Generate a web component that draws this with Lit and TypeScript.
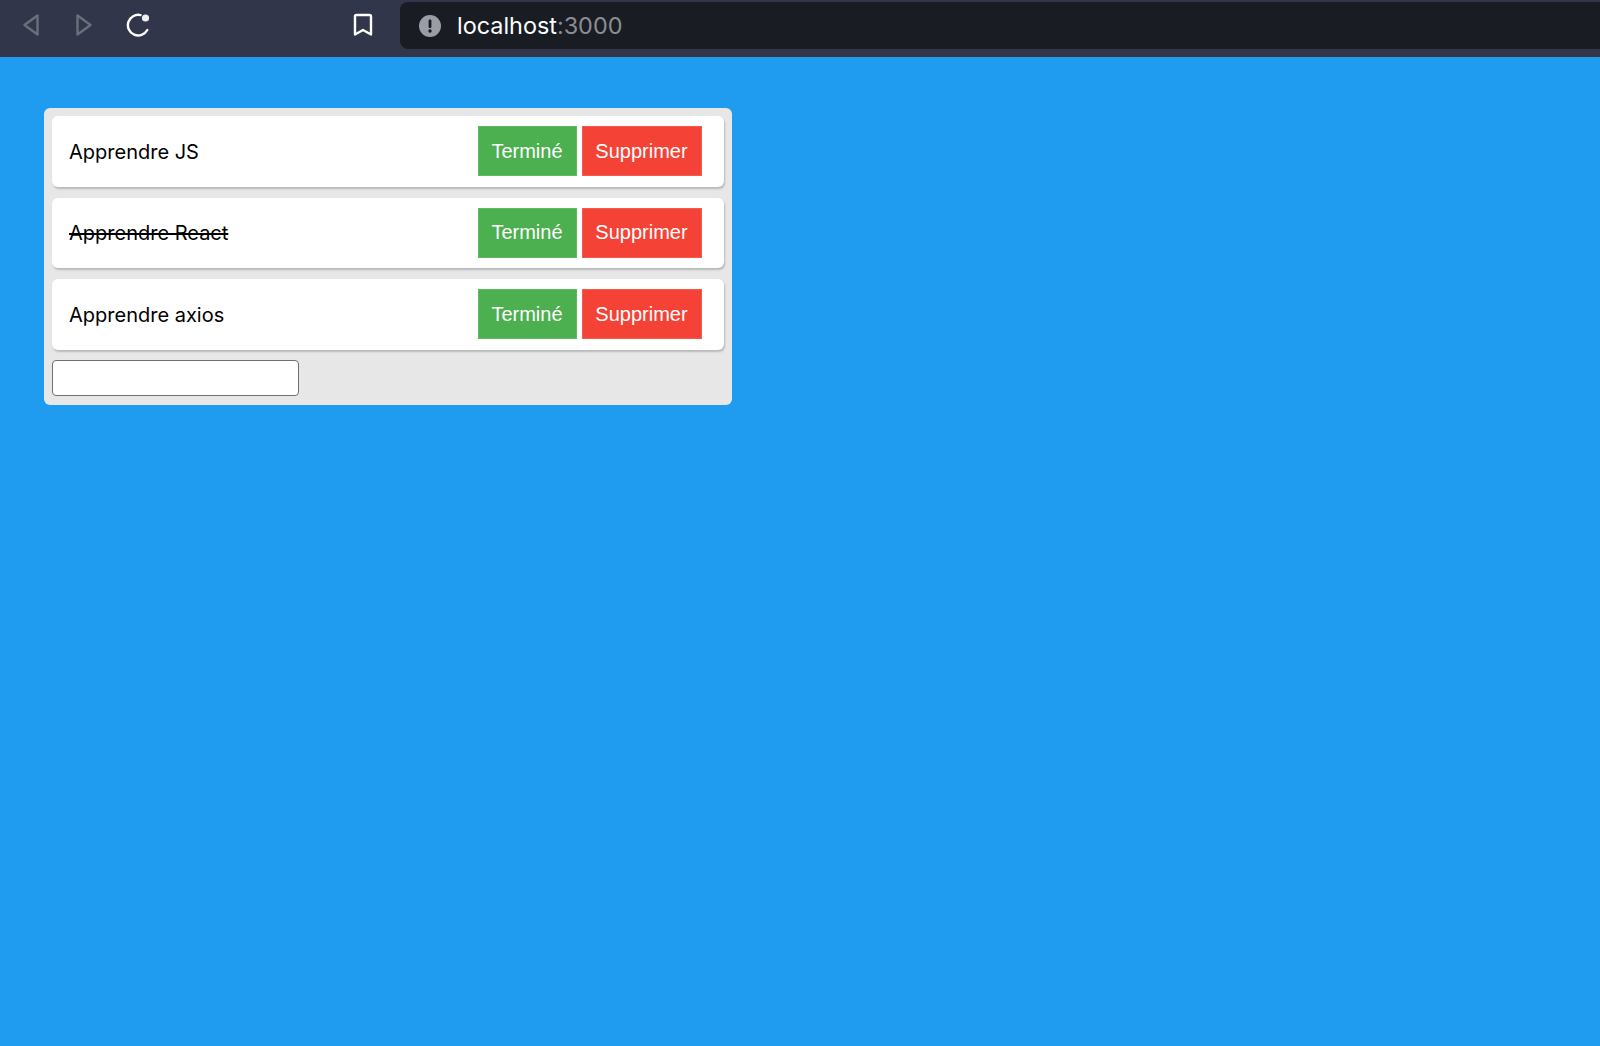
import { LitElement, html, css } from "lit";
import { customElement } from "lit/decorators.js";

const todos = [
  { text: "Apprendre JS", done: false },
  { text: "Apprendre React", done: true },
  { text: "Apprendre axios", done: false },
];

@customElement("app-root")
export class AppRoot extends LitElement {
  static styles = css`
    :host { display: block; min-height: 1046px; background: #1f9cf0; font-family: Inter, "Liberation Sans", sans-serif; }
    .bar { height: 57px; box-sizing: border-box; background: #32364a; display: flex; align-items: flex-start; }
    .nav { display: flex; width: 400px; height: 50px; flex: none; align-items: center; }
    .nav svg { display: block; flex: none; }
    .back { margin-left: 22px; }
    .fwd { margin-left: 35px; }
    .reload { margin-left: 33px; }
    .mark { margin-left: 203px; }
    .url { flex: 1; height: 47px; margin-top: 2px; background: #191c23; border-radius: 8px 0 0 8px; display: flex; align-items: center; padding-left: 19px; box-sizing: border-box; }
    .host { margin-left: 16px; font-size: 23.4px; color: #fff; padding-bottom: 1px; }
    .port { color: #8b8d91; }
    .panel { margin: 51px 0 0 44px; width: 688px; box-sizing: border-box; background: #e7e7e7; border-radius: 6px; padding: 8px 8px 8.5px; display: flex; flex-direction: column; }
    .item { height: 70.5px; margin-bottom: 11px; box-sizing: border-box; background: #fff; border-radius: 6px; box-shadow: 1px 2px 2px rgba(0,0,0,.2); display: flex; align-items: center; padding: 0 22.5px 0 17px; }
    .item:nth-of-type(3) { margin-bottom: 10.5px; }
    .text { flex: 1; font-size: 20px; color: #000; padding-top: 1px; }
    .done { text-decoration: line-through; }
    button { height: 50px; border: 1px solid; box-sizing: border-box; color: #fff; font: 20px "Liberation Sans", Arial, sans-serif; padding: 0; margin-left: 5px; }
    .ok { width: 99px; background: #4caf50; border-color: #5fb863; }
    .del { width: 120px; background: #f44336; border-color: #f55a4e; }
    input { display: block; width: 246.5px; height: 36px; box-sizing: border-box; border: 1.5px solid #707070; border-radius: 4px; background: #fff; padding: 0; }
  `;

  render() {
    return html`
      <div class="bar">
        <div class="nav">
          <svg class="back" width="18" height="24" viewBox="0 0 18 24" fill="none" stroke="#6b6e7b" stroke-width="2.4" stroke-linejoin="round"><path d="M15.5 2.500v19L2.500 12z"/></svg>
          <svg class="fwd" width="18" height="24" viewBox="0 0 18 24" fill="none" stroke="#6b6e7b" stroke-width="2.4" stroke-linejoin="round"><path d="M2.500 2.500v19L15.500 12z"/></svg>
          <svg class="reload" width="24" height="24" viewBox="0 0 24 24" fill="none"><path d="M21.300 17A10.300 10.300 0 1 1 14.500 2.100" stroke="#fff" stroke-width="2.4" stroke-linecap="round"/><circle cx="19.500" cy="5" r="3.600" fill="#f0f0f2"/></svg>
          <svg class="mark" width="20" height="24" viewBox="0 0 20 24" fill="none" stroke="#fff" stroke-width="2.4" stroke-linejoin="round"><path d="M3.500 2h13a1.500 1.500 0 0 1 1.500 1.500V21.500L10 17l-8 4.500V3.500A1.500 1.500 0 0 1 3.500 2z"/></svg>
        </div>
        <div class="url">
          <svg width="22" height="22" viewBox="0 0 22 22"><circle cx="11" cy="11" r="11" fill="#9b9da6"/><rect x="9.600" y="4.500" width="2.800" height="8.500" rx="1.200" fill="#191c23"/><circle cx="11" cy="16" r="1.700" fill="#191c23"/></svg>
          <span class="host">localhost<span class="port">:3000</span></span>
        </div>
      </div>
      <div class="panel">
        ${todos.map(t => html`
          <div class="item">
            <span class="text ${t.done ? "done" : ""}">${t.text}</span>
            <button class="ok">Terminé</button>
            <button class="del">Supprimer</button>
          </div>`)}
        <input type="text" />
      </div>
    `;
  }
}
